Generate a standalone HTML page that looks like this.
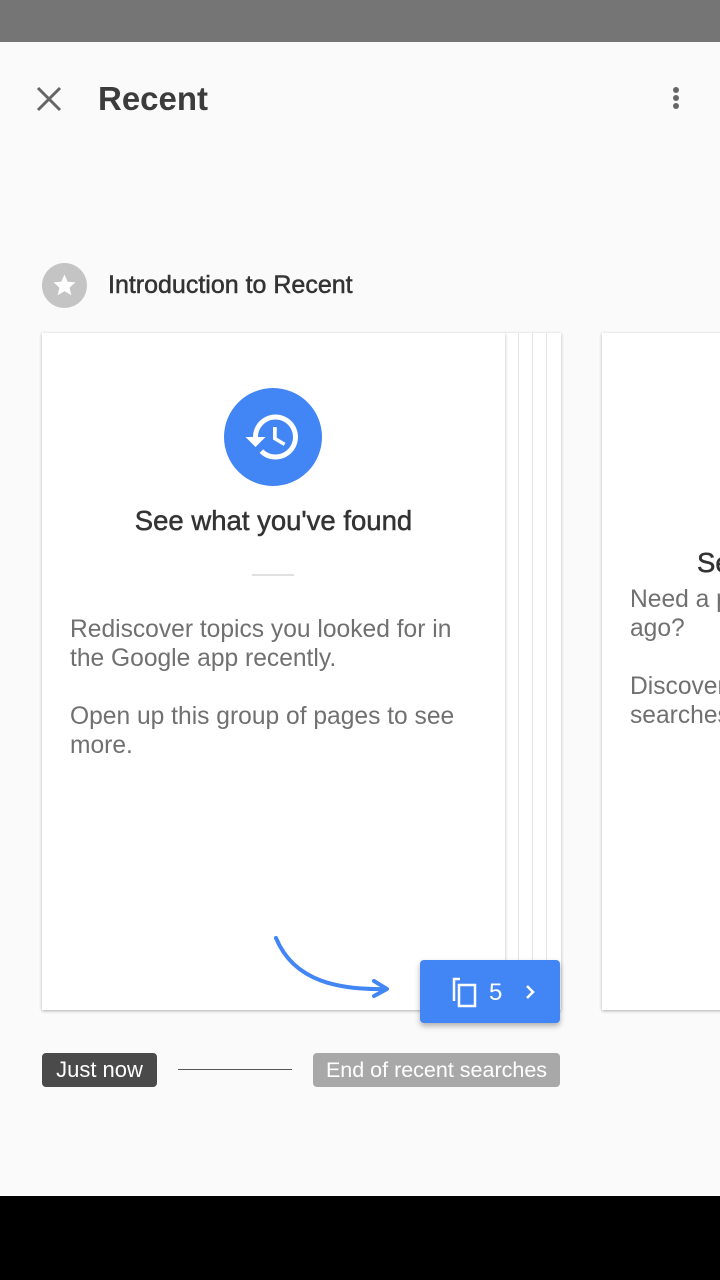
<!DOCTYPE html>
<html><head><meta charset="utf-8"><style>
*{margin:0;padding:0;box-sizing:border-box}
body{width:720px;height:1280px;background:#fafafa;font-family:"Liberation Sans",sans-serif;position:relative;overflow:hidden}
.abs{position:absolute}
.t{white-space:nowrap}
.med{-webkit-text-stroke:0.5px currentColor}
</style></head><body>
<div class="abs" style="left:0;top:0;width:720px;height:42px;background:#757575"></div>
<div class="abs" style="left:0;top:1196px;width:720px;height:84px;background:#000"></div>
<svg class="abs" style="left:34px;top:84px" width="30" height="30" viewBox="0 0 30 30"><path d="M4 4L26 26M26 4L4 26" stroke="#666" stroke-width="3"/></svg>
<div class="abs t" style="left:98px;top:80px;font-size:33px;font-weight:bold;color:#3c3c3c">Recent</div>
<div class="abs" style="left:673px;top:87px;width:6px;height:6px;border-radius:50%;background:#666"></div>
<div class="abs" style="left:673px;top:95px;width:6px;height:6px;border-radius:50%;background:#666"></div>
<div class="abs" style="left:673px;top:103px;width:6px;height:6px;border-radius:50%;background:#666"></div>
<div class="abs" style="left:42px;top:263px;width:45px;height:45px;border-radius:50%;background:#c4c4c4"></div>
<svg class="abs" style="left:49px;top:270px" width="31" height="31" viewBox="0 0 24 24"><path d="M12 3.5l2.5 5.6 6 .5-4.6 4 1.4 5.9L12 16.4l-5.3 3.1 1.4-5.9-4.6-4 6-.5z" fill="#fff"/></svg>
<div class="abs t med" style="left:108px;top:271px;font-size:25px;color:#333">Introduction to Recent</div>
<!-- stacks -->
<div class="abs" style="left:504px;top:333px;width:57px;height:677px;background:#fff;box-shadow:0 1px 3px rgba(0,0,0,.3)"></div>
<div class="abs" style="left:518px;top:333px;width:1px;height:677px;background:#e4e4e4"></div>
<div class="abs" style="left:532px;top:333px;width:1px;height:677px;background:#e4e4e4"></div>
<div class="abs" style="left:546px;top:333px;width:1px;height:677px;background:#e4e4e4"></div>
<div class="abs" style="left:42px;top:333px;width:463px;height:677px;background:#fff;box-shadow:0 1px 3px rgba(0,0,0,.3)"></div>
<div class="abs" style="left:224px;top:388px;width:98px;height:98px;border-radius:50%;background:#4285f4"></div>
<svg class="abs" style="left:243px;top:407px" width="60" height="60" viewBox="0 0 24 24"><path fill="#fff" d="M13 3a9 9 0 0 0-9 9H1l3.89 3.89.07.14L9 12H6c0-3.87 3.13-7 7-7s7 3.13 7 7-3.13 7-7 7c-1.93 0-3.68-.79-4.94-2.06l-1.42 1.42A8.954 8.954 0 0 0 13 21a9 9 0 0 0 0-18zm-1 5v5l4.28 2.54.72-1.21-3.5-2.08V8H12z"/></svg>
<div class="abs t med" style="left:42px;width:463px;text-align:center;top:505px;font-size:27.5px;color:#333">See what you've found</div>
<div class="abs" style="left:252px;top:574px;width:42px;height:2px;background:#e0e0e0"></div>
<div class="abs t" style="left:70px;top:615px;font-size:24.6px;line-height:29px;color:#707070">Rediscover topics you looked for in<br>the Google app recently.<br><br>Open up this group of pages to see<br>more.</div>
<svg class="abs" style="left:270px;top:932px" width="124" height="66" viewBox="0 0 124 66"><path d="M6 6C24 50 70 58 116 57" fill="none" stroke="#4285f4" stroke-width="4" stroke-linecap="round"/><path d="M104 49L117 57L104 64" fill="none" stroke="#4285f4" stroke-width="4" stroke-linecap="round" stroke-linejoin="round"/></svg>
<div class="abs" style="left:420px;top:960px;width:140px;height:63px;border-radius:4px;background:#4285f4;box-shadow:0 3px 6px rgba(0,0,0,.3)"></div>
<svg class="abs" style="left:450px;top:977px" width="28" height="32" viewBox="0 0 28 32"><path d="M10 2H4v22" fill="none" stroke="#fff" stroke-width="2.5"/><rect x="9" y="8" width="16" height="21" fill="none" stroke="#fff" stroke-width="2.5"/></svg>
<div class="abs t" style="left:489px;top:979px;font-size:24px;color:#fff">5</div>
<svg class="abs" style="left:522px;top:982px" width="16" height="20" viewBox="0 0 16 20"><path d="M5 4l6 6-6 6" fill="none" stroke="#fff" stroke-width="2.5"/></svg>
<!-- right card -->
<div class="abs" style="left:602px;top:333px;width:130px;height:677px;background:#fff;box-shadow:0 1px 3px rgba(0,0,0,.3)"></div>
<div class="abs t med" style="left:697px;top:547px;font-size:27.5px;color:#333">Se</div>
<div class="abs t" style="left:630px;top:585px;font-size:24.6px;line-height:29px;color:#707070">Need a p<br>ago?<br><br>Discover<br>searches</div>
<!-- bottom pills -->
<div class="abs t" style="left:42px;top:1053px;width:115px;height:34px;border-radius:4px;background:#4a4a4a;color:#fff;font-size:22px;line-height:34px;text-align:center">Just now</div>
<div class="abs" style="left:178px;top:1069px;width:114px;height:1px;background:#555"></div>
<div class="abs t" style="left:313px;top:1053px;width:247px;height:34px;border-radius:4px;background:#a8a8a8;color:#fff;font-size:21.5px;line-height:34px;text-align:center">End of recent searches</div>
</body></html>
